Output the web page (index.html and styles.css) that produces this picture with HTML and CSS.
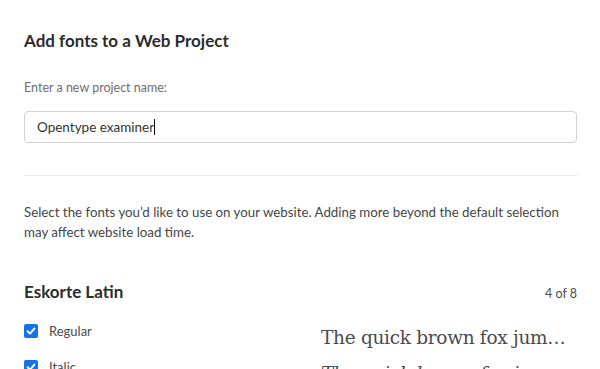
FILE: index.html
```html
<!DOCTYPE html>
<html lang="en">
<head>
    <meta charset="UTF-8">
    <meta name="viewport" content="width=device-width, initial-scale=1.0">
    <title>Add fonts to a Web Project</title>
    <link rel="stylesheet" href="styles.css">
</head>
<body>
    <div class="dialog">
        <h1>Add fonts to a Web Project</h1>
        <label class="field-label">Enter a new project name:</label>
        <div class="textfield"><span>Opentype examiner</span><span class="caret"></span></div>
        <hr class="divider">
        <p class="note">Select the fonts you’d like to use on your website. Adding more beyond the default selection may affect website load time.</p>

        <div class="family-head">
            <h2>Eskorte Latin</h2>
            <span class="count">4 of 8</span>
        </div>
        <div class="style-row">
            <span class="check"><svg viewBox="0 0 14 14" width="14" height="14"><path d="M3.6 7.2 L6 9.6 L10.4 4.6" fill="none" stroke="#fff" stroke-width="2" stroke-linecap="round" stroke-linejoin="round"/></svg></span>
            <span class="style-name">Regular</span>
            <span class="preview">The quick brown fox jumps over the lazy dog</span>
        </div>
        <div class="style-row">
            <span class="check"><svg viewBox="0 0 14 14" width="14" height="14"><path d="M3.6 7.2 L6 9.6 L10.4 4.6" fill="none" stroke="#fff" stroke-width="2" stroke-linecap="round" stroke-linejoin="round"/></svg></span>
            <span class="style-name">Italic</span>
            <span class="preview italic">The quick brown fox jumps over the lazy dog</span>
        </div>
    </div>
</body>
</html>
```

FILE: styles.css
```css
body {
    margin: 0;
    padding: 0;
    background-color: #fff;
    font-family: Lato, "Open Sans", sans-serif;
    color: #2c2c2c;
}
.dialog {
    padding: 29px 23px 0 24px;
}
h1 {
    font-size: 17px;
    font-weight: bold;
    line-height: 24px;
    margin: 0 0 27px 0;
}
.field-label {
    display: block;
    font-size: 12.5px;
    line-height: 16px;
    color: #6e6e6e;
    margin-bottom: 15px;
}
.textfield {
    border: 1px solid #d3d3d3;
    border-radius: 4px;
    box-sizing: border-box;
    height: 32px;
    padding: 0 12px;
    display: flex;
    align-items: center;
    font-size: 13.5px;
    color: #333;
}
.caret {
    display: inline-block;
    width: 1px;
    height: 16px;
    background-color: #111;
}
.divider {
    border: none;
    border-top: 1px solid #e8e8e8;
    margin: 32px 0 0 0;
}
.note {
    font-size: 13.3px;
    line-height: 20px;
    color: #454545;
    margin: 26px 0 0 0;
}
.family-head {
    display: flex;
    justify-content: space-between;
    align-items: baseline;
    margin-top: 38px;
}
h2 {
    font-size: 17px;
    font-weight: bold;
    line-height: 24px;
    margin: 0;
}
.count {
    font-size: 12.5px;
    color: #4b4b4b;
}
.style-row {
    display: flex;
    align-items: center;
    height: 36px;
}
.family-head + .style-row {
    margin-top: 9px;
}
.check {
    width: 14px;
    height: 14px;
    border-radius: 2px;
    background-color: #1473e6;
    display: flex;
}
.style-name {
    font-size: 13px;
    color: #4b4b4b;
    margin-left: 11px;
}
.preview {
    margin-left: auto;
    margin-top: 12px;
    width: 256px;
    font-family: "DejaVu Serif", serif;
    font-size: 18.5px;
    letter-spacing: -0.3px;
    color: #4b4b4b;
    white-space: nowrap;
    overflow: hidden;
    text-overflow: ellipsis;
}
.preview.italic {
    font-style: italic;
}
```
